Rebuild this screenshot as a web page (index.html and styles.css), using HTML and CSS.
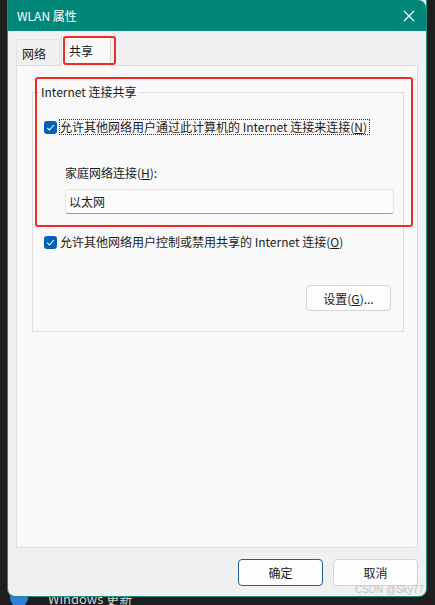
FILE: index.html
```html
<!DOCTYPE html>
<html lang="zh-CN">
  <head>
    <meta charset="UTF-8" />
    <meta name="viewport" content="width=device-width, initial-scale=1.0" />
    <title>WLAN 属性</title>

    <link rel="stylesheet" href="styles.css">
  </head>

  <body>
    <div class="desktop">
      <div class="dialog">
        <!-- title bar -->
        <div class="titlebar">
          <div class="title">WLAN 属性</div>
          <div class="close">
            <svg width="12" height="12" viewBox="0 0 12 12">
              <path d="M1 1 L11 11 M11 1 L1 11" stroke="#ffffff" stroke-width="1.2" fill="none" />
            </svg>
          </div>
        </div>

        <div class="dialog-body">
          <div class="tabs">
            <div class="tab">网络</div>
            <div class="tab active">共享</div>
          </div>

          <div class="panel">
            <fieldset class="group">
              <legend>Internet 连接共享</legend>

              <label class="check-row first">
                <span class="checkbox">
                  <svg width="9" height="9" viewBox="0 0 9 9">
                    <path d="M1.2 4.8 L3.5 7 L7.8 2" stroke="#ffffff" stroke-width="1.1" fill="none" />
                  </svg>
                </span>
                <span class="check-text focused">允许其他网络用户通过此计算机的 Internet 连接来连接(<u>N</u>)</span>
              </label>

              <div class="home-label">家庭网络连接(<u>H</u>):</div>
              <div class="select">以太网</div>

              <label class="check-row second">
                <span class="checkbox">
                  <svg width="9" height="9" viewBox="0 0 9 9">
                    <path d="M1.2 4.8 L3.5 7 L7.8 2" stroke="#ffffff" stroke-width="1.1" fill="none" />
                  </svg>
                </span>
                <span class="check-text">允许其他网络用户控制或禁用共享的 Internet 连接(<u>O</u>)</span>
              </label>

              <div class="settings-row">
                <button class="btn">设置(<u>G</u>)...</button>
              </div>
            </fieldset>
          </div>

          <div class="footer">
            <button class="btn default">确定</button>
            <button class="btn">取消</button>
          </div>
        </div>

        <!-- red annotations -->
        <div class="mark mark-tab"></div>
        <div class="mark mark-group"></div>
        <div class="watermark">CSDN @Sky77</div>
      </div>

      <div class="taskbar">
        <span class="taskbar-icon"></span>
        <span class="taskbar-text">Windows 更新</span>
      </div>
    </div>
  </body>
</html>
```

FILE: styles.css
```css
body {
  margin: 0;
  padding: 0;
  background-color: #1e1e1e;
  font-family: "Segoe UI", "Noto Sans CJK SC", sans-serif;
  font-size: 12px;
  color: #1b1b1b;
  overflow: hidden;
}

.desktop {
  padding-left: 7px;
  height: 605px;
}

.dialog {
  position: relative;
  z-index: 1;
  width: 420px;
  height: 597px;
  box-sizing: border-box;
  border: 1px solid #1c8c80;
  border-top: none;
  border-radius: 0 0 8px 8px;
  background-color: #f0f0f0;
  display: flex;
  flex-direction: column;
  overflow: hidden;
}

.titlebar {
  height: 31px;
  flex-shrink: 0;
  background-color: #00877a;
  display: flex;
  align-items: center;
  justify-content: space-between;
  padding: 0 11px 0 9px;
  border-radius: 0 8px 0 0;
}

.title {
  color: #ffffff;
  font-size: 12px;
  line-height: 16px;
}

.close {
  display: flex;
  align-items: center;
}

.dialog-body {
  flex: 1;
  display: flex;
  flex-direction: column;
  padding: 5px 8px 10px 8px;
}

.tabs {
  display: flex;
  align-items: flex-end;
  height: 29px;
  position: relative;
  z-index: 2;
}

.tab {
  height: 26px;
  line-height: 28px;
  padding: 0 13px 0 5px;
  box-sizing: border-box;
  border: 1px solid #e3e3e3;
  border-bottom: none;
  background-color: #f0f0f0;
}

.tab.active {
  height: 30px;
  margin-bottom: -1px;
  line-height: 28px;
  padding: 0 17px 0 7px;
  background-color: #f9f9f9;
  border-color: #dcdcdc;
  margin-left: 1px;
}

.panel {
  flex: 1;
  border: 1px solid #dcdcdc;
  background-color: #f9f9f9;
  padding: 18px 13px 0 15px;
}

.group {
  margin: 0;
  border: 1px solid #dcdcdc;
  padding: 0 9px 20px 11px;
}

legend {
  padding: 0 3px;
  margin-left: -6px;
  line-height: 16px;
}

.check-row {
  display: flex;
  align-items: center;
  height: 16px;
}

.check-row.first {
  margin-top: 19px;
}

.check-row.second {
  margin-top: 20px;
}

.checkbox {
  width: 13px;
  height: 13px;
  border-radius: 3px;
  background-color: #0062b8;
  display: flex;
  align-items: center;
  justify-content: center;
  margin-right: 3px;
}

.check-text {
  line-height: 14px;
  white-space: nowrap;
}

.check-text.focused {
  outline: 1px dotted #333333;
  padding-right: 2px;
}

.home-label {
  margin: 30px 0 0 21px;
  line-height: 16px;
}

.select {
  margin: 8px 0 0 21px;
  height: 25px;
  box-sizing: border-box;
  line-height: 23px;
  padding-left: 3px;
  background-color: #fbfbfb;
  border: 1px solid #e6e6e6;
  border-bottom-color: #9a9a9a;
  border-radius: 3px;
}

.settings-row {
  display: flex;
  justify-content: flex-end;
  margin-top: 35px;
  padding-right: 3px;
}

.btn {
  width: 85px;
  height: 26px;
  font-family: inherit;
  font-size: 12px;
  color: #1b1b1b;
  background-color: #fdfdfd;
  border: 1px solid #d5d5d5;
  border-radius: 4px;
  padding: 0;
}

.footer {
  display: flex;
  justify-content: flex-end;
  gap: 10px;
  margin-top: 11px;
}

.footer .btn {
  height: 27px;
}

.btn.default {
  border-color: #1e5e98;
}

.mark {
  position: absolute;
  z-index: 5;
  border: 2px solid #ee2b25;
  border-radius: 3px;
  box-sizing: border-box;
  pointer-events: none;
}

.mark-tab {
  left: 55px;
  top: 36px;
  width: 53px;
  height: 29px;
}

.mark-group {
  left: 27px;
  top: 77px;
  width: 378px;
  height: 150px;
}

.watermark {
  position: absolute;
  z-index: 5;
  right: 2px;
  bottom: 1px;
  font-family: "Liberation Sans", sans-serif;
  font-size: 10px;
  color: rgba(185, 185, 185, 0.85);
}

.taskbar {
  display: flex;
  align-items: center;
  margin-top: -10px;
  height: 22px;
  color: #d8d8d8;
  font-size: 13px;
}

.taskbar-icon {
  width: 18px;
  height: 18px;
  border-radius: 50%;
  background-color: #2f7fd8;
  margin: 0 20px 0 3px;
}
```
